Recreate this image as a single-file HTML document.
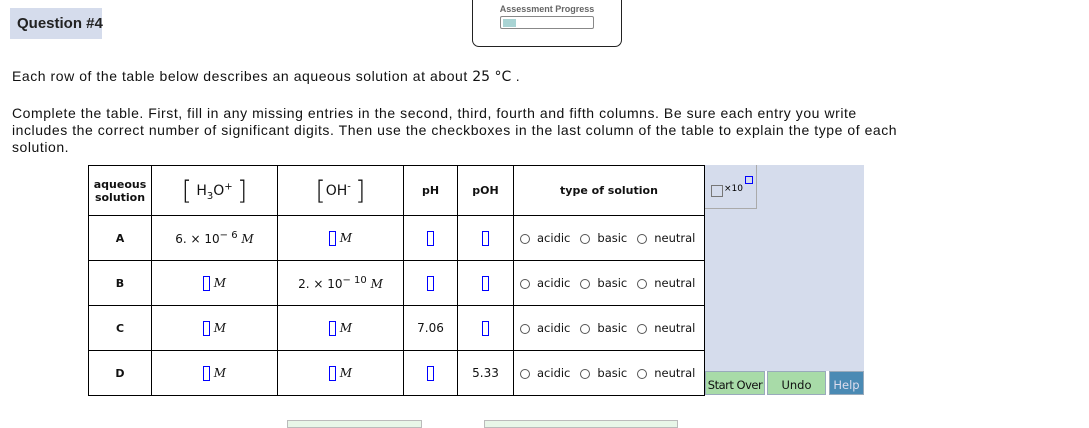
<!DOCTYPE html>
<html><head><meta charset="utf-8"><style>
body{margin:0;width:1089px;height:423px;background:#fff;position:relative;overflow:hidden;font-family:"Liberation Sans",sans-serif;}
.a{position:absolute;}
.q{left:10px;top:8px;width:92px;height:31px;background:#d5dcec;font-weight:bold;font-size:15px;line-height:31px;color:#222;white-space:nowrap;box-sizing:border-box;padding-left:7px;}
.prog{left:472px;top:-2px;width:148px;height:48px;border:1px solid #222;border-top:none;border-radius:0 0 7px 7px;}
.p{font-size:14px;letter-spacing:0.55px;color:#111;left:12px;line-height:17px;}
table{position:absolute;left:88px;top:165px;border-collapse:collapse;font-family:"DejaVu Sans",sans-serif;font-size:12px;color:#111;}
td{border:1.5px solid #000;text-align:center;padding:0;}
.h td{height:49px;font-weight:bold;font-size:11px;}
.r td{height:44px;}
.bx{display:inline-block;width:5px;height:13px;border:1.5px solid #00f;vertical-align:middle;}
.m{font-family:"DejaVu Serif",serif;font-style:italic;}
.rad{display:inline-block;width:8px;height:8px;border:1px solid #555;border-radius:50%;vertical-align:middle;margin:0 7px 0 0;}
.sol{text-align:left;padding-left:6px;font-size:11.5px;white-space:nowrap;}
.sol span{margin-right:10px}
sup{font-size:10px}
.btn{top:371px;height:24px;background:#a8dba8;font-family:"DejaVu Sans",sans-serif;font-size:11.5px;line-height:26px;text-align:center;color:#111;border:1px solid #9ab;box-sizing:border-box;white-space:nowrap;overflow:hidden;}
</style></head><body>
<div class="a q">Question #4</div>
<div class="a prog"><div class="a" style="left:0;width:148px;top:6px;text-align:center;font-size:9px;font-weight:bold;color:#666;">Assessment Progress</div>
<div class="a" style="left:27px;top:18px;width:92px;height:11px;border:1px solid #888;border-radius:2px;"><div class="a" style="left:2px;top:2px;width:13px;height:8px;background:#a9d4d4"></div></div></div>
<div class="a p" style="top:68px;white-space:nowrap;">Each row of the table below describes an aqueous solution at about <span style="font-family:'DejaVu Sans';font-size:14px;letter-spacing:0">25 °C</span> .</div>
<div class="a p" style="top:105px;width:940px;">Complete the table. First, fill in any missing entries in the second, third, fourth and fifth columns. Be sure each entry you write<br>includes the correct number of significant digits. Then use the checkboxes in the last column of the table to explain the type of each<br>solution.</div>
<table>
<tr class="h"><td style="width:62px">aqueous<br>solution</td><td style="width:125px;font-weight:normal;font-size:14px"><span style="font-size:26px;font-weight:100;vertical-align:middle">[</span> H<sub style="font-size:10px">3</sub>O<sup>+</sup> <span style="font-size:26px;font-weight:100;vertical-align:middle">]</span></td><td style="width:125px;font-weight:normal;font-size:14px"><span style="font-size:26px;font-weight:100;vertical-align:middle">[</span>OH<sup>-</sup> <span style="font-size:26px;font-weight:100;vertical-align:middle">]</span></td><td style="width:53px">pH</td><td style="width:55px">pOH</td><td style="width:190px">type of solution</td></tr>
<tr class="r"><td><b style="font-size:11px">A</b></td><td>6. × 10<sup>− 6</sup> <span class="m">M</span></td><td><span class="bx"></span> <span class="m">M</span></td><td><span class="bx"></span></td><td><span class="bx"></span></td><td class="sol"><span><i class="rad"></i>acidic</span><span><i class="rad"></i>basic</span><i class="rad"></i>neutral</td></tr>
<tr class="r"><td><b style="font-size:11px">B</b></td><td><span class="bx"></span> <span class="m">M</span></td><td>2. × 10<sup>− 10</sup> <span class="m">M</span></td><td><span class="bx"></span></td><td><span class="bx"></span></td><td class="sol"><span><i class="rad"></i>acidic</span><span><i class="rad"></i>basic</span><i class="rad"></i>neutral</td></tr>
<tr class="r"><td><b style="font-size:11px">C</b></td><td><span class="bx"></span> <span class="m">M</span></td><td><span class="bx"></span> <span class="m">M</span></td><td>7.06</td><td><span class="bx"></span></td><td class="sol"><span><i class="rad"></i>acidic</span><span><i class="rad"></i>basic</span><i class="rad"></i>neutral</td></tr>
<tr class="r"><td><b style="font-size:11px">D</b></td><td><span class="bx"></span> <span class="m">M</span></td><td><span class="bx"></span> <span class="m">M</span></td><td><span class="bx"></span></td><td>5.33</td><td class="sol"><span><i class="rad"></i>acidic</span><span><i class="rad"></i>basic</span><i class="rad"></i>neutral</td></tr>
</table>
<div class="a" style="left:705px;top:165px;width:159px;height:206px;background:#d5dcec"></div>
<div class="a" style="left:705px;top:165px;width:52px;height:44px;border-right:1px solid #aaa;border-bottom:1px solid #aaa;box-sizing:border-box;">
<div class="a" style="left:6px;top:20px;width:10px;height:10px;border:1px solid #777"></div>
<div class="a" style="left:40px;top:11px;width:6px;height:6px;border:1px solid #00f"></div>
<div class="a" style="left:19px;top:19px;font-family:'DejaVu Sans';font-size:9px;">×10</div></div>
<div class="a btn" style="left:705px;width:60px;letter-spacing:-0.5px">Start Over</div>
<div class="a btn" style="left:767px;width:59px;">Undo</div>
<div class="a btn" style="left:829px;width:35px;background:#4a8ab4;color:#dde;">Help</div>
<div class="a" style="left:287px;top:420px;width:133px;height:6px;border:1px solid #bbb;background:#e8f6e8"></div>
<div class="a" style="left:484px;top:420px;width:192px;height:6px;border:1px solid #bbb;background:#e8f6e8"></div>
</body></html>
